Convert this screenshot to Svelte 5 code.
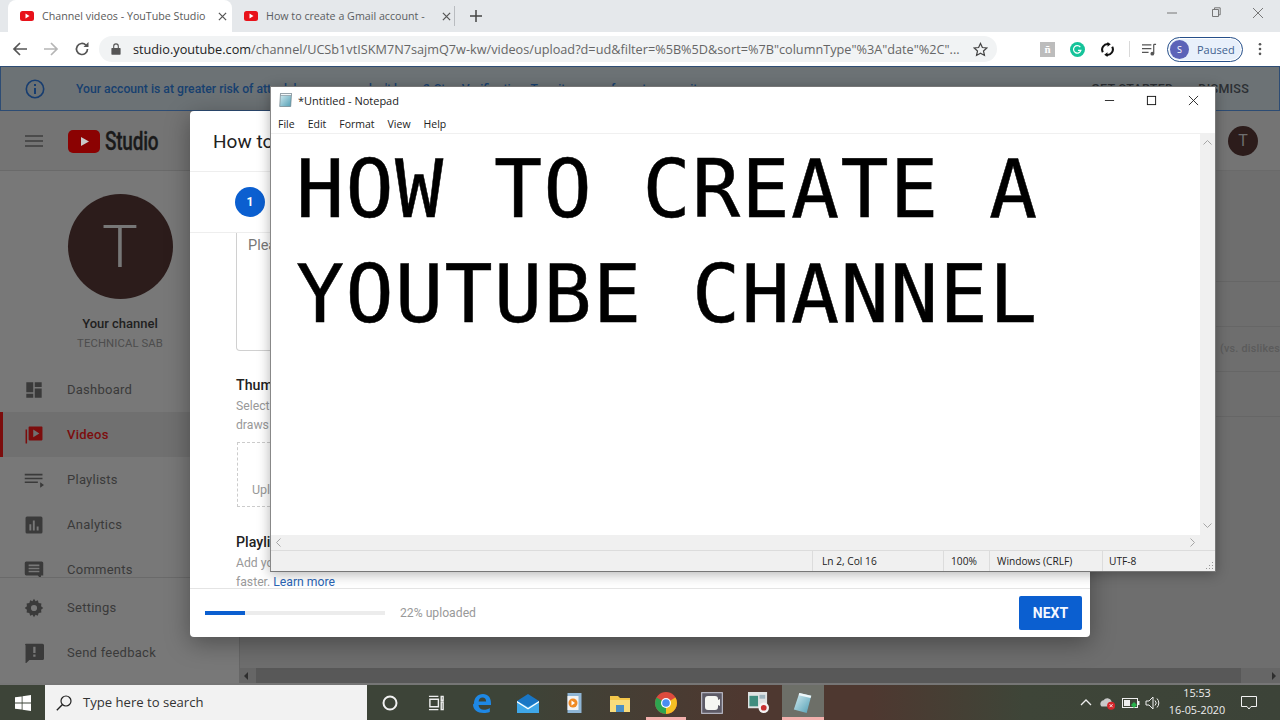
<script>
  const scrollNav = [
    { label: 'Dashboard', d: 'M3 3h9v13H3zM14 3h9v6h-9zM14 11h9v12h-9zM3 18h9v5H3z' },
    { label: 'Videos', active: true, d: 'M7 2h16a1 1 0 0 1 1 1v16a1 1 0 0 1-1 1H7a1 1 0 0 1-1-1V3a1 1 0 0 1 1-1zM12 6v10l8-5zM2 6h2v18h-2z' },
    { label: 'Playlists', d: 'M1 5h23v2H1zM1 10h23v2H1zM1 15h17v2H1zM21 16v7l5-3.500z' },
    { label: 'Analytics', d: 'M4 2h18a2 2 0 0 1 2 2v18a2 2 0 0 1-2 2H4a2 2 0 0 1-2-2V4a2 2 0 0 1 2-2zM7 12v8h2.500v-8zM11.500 7v13H14V7zM16.500 15v5H19v-5z' },
    { label: 'Comments', d: 'M3 2h20a2 2 0 0 1 2 2v16h-3v5l-4-5H3a2 2 0 0 1-2-2V4a2 2 0 0 1 2-2zM6 6v2h14V6zM6 10v2h14v-2zM6 14v2h14v-2z' }
  ];
  const fixedNav = [
    { label: 'Settings', d: 'M13 1l2 3.200 3-1.200 1 3.600 3.600.400-.400 3.600L25 13l-2.800 2.400.400 3.600-3.600.400-1 3.600-3-1.200L13 25l-2-3.200-3 1.200-1-3.600-3.600-.400.400-3.600L1 13l2.800-2.400-.400-3.600 3.600-.400 1-3.600 3 1.200zM13 9a4 4 0 1 0 0 8 4 4 0 0 0 0-8z' },
    { label: 'Send feedback', d: 'M3 1h21a2 2 0 0 1 2 2v17a2 2 0 0 1-2 2H7l-5 5V3a1 1 0 0 1 1-2zM12 5v8h3V5zM12 15v3h3v-3z' }
  ];
</script>

{#snippet navItem(item)}
  <div class="item" class:current={item.active}>
    <svg viewBox="0 0 26 26"><path d={item.d} fill={item.active ? '#7c0d0d' : '#3a3a3a'} fill-rule="evenodd"/></svg>
    <span>{item.label}</span>
  </div>
{/snippet}

<div class="screen">
  <div class="tabstrip">
    <div class="tab active">
      <svg class="fav" viewBox="0 0 14 10"><rect width="14" height="10" rx="2.500" fill="#e8121a"/><path d="M5.500 2.500v5l4-2.500z" fill="#fff"/></svg>
      <span class="tabtitle">Channel videos - YouTube Studio</span>
      <svg class="x" viewBox="0 0 10 10"><path d="M1 1l8 8M9 1l-8 8" stroke="#555" stroke-width="1.400"/></svg>
    </div>
    <div class="tab">
      <svg class="fav" viewBox="0 0 14 10"><rect width="14" height="10" rx="2.500" fill="#e8121a"/><path d="M5.500 2.500v5l4-2.500z" fill="#fff"/></svg>
      <span class="tabtitle">How to create a Gmail account -</span>
      <svg class="x" viewBox="0 0 10 10"><path d="M1 1l8 8M9 1l-8 8" stroke="#555" stroke-width="1.400"/></svg>
    </div>
    <span class="tabsep"></span>
    <svg class="plus" viewBox="0 0 12 12"><path d="M6 0v12M0 6h12" stroke="#444" stroke-width="1.500"/></svg>
    <div class="winbtns">
      <svg viewBox="0 0 12 12"><path d="M1 6h10" stroke="#777"/></svg>
      <svg viewBox="0 0 12 12"><path d="M3.500 2.500h6v7h-6zM5.500 2.500V.8h5.700v7H9.500" fill="none" stroke="#777"/></svg>
      <svg viewBox="0 0 12 12"><path d="M1 1l10 10M11 1L1 11" stroke="#777"/></svg>
    </div>
  </div>

  <div class="toolbar">
    <svg class="nav" viewBox="0 0 16 16"><path d="M15 8H2M8 2L2 8l6 6" fill="none" stroke="#555" stroke-width="1.700"/></svg>
    <svg class="nav" viewBox="0 0 16 16"><path d="M1 8h13M8 2l6 6-6 6" fill="none" stroke="#b5b5b5" stroke-width="1.700"/></svg>
    <svg class="nav" viewBox="0 0 16 16"><path d="M13.500 8a5.500 5.500 0 1 1-1.600-3.900" fill="none" stroke="#555" stroke-width="1.700"/><path d="M14.500 1v5h-5z" fill="#555"/></svg>
    <div class="omnibox">
      <svg class="lock" viewBox="0 0 10 12"><path d="M1 5h8a.6.600 0 0 1 .6.600v5.500a.6.600 0 0 1-.6.600H1a.6.600 0 0 1-.6-.600V5.600A.6.600 0 0 1 1 5z" fill="#555"/><path d="M2.700 5V3.200a2.300 2.300 0 0 1 4.600 0V5" fill="none" stroke="#555" stroke-width="1.100"/></svg>
      <span class="url"><b>studio.youtube.com</b>/channel/UCSb1vtISKM7N7sajmQ7w-kw/videos/upload?d=ud&amp;filter=%5B%5D&amp;sort=%7B"columnType"%3A"date"%2C"...</span>
      <svg class="star" viewBox="0 0 16 16"><path d="M8 1.500l2 4.400 4.700.5-3.500 3.200 1 4.700L8 11.900l-4.200 2.400 1-4.700L1.300 6.400 6 5.900z" fill="none" stroke="#444" stroke-width="1.300"/></svg>
    </div>
    <div class="exts">
      <span class="ext-f">ñ</span>
      <svg class="ext" viewBox="0 0 16 16"><circle cx="8" cy="8" r="8" fill="#15c39a"/><path d="M11 5.500a4 4 0 1 0 .6 3.500H8.500" fill="none" stroke="#fff" stroke-width="1.300"/></svg>
      <svg class="ext" viewBox="0 0 16 16"><path d="M3 11A6 6 0 0 1 9 2.200M13 5a6 6 0 0 1-6 8.800" fill="none" stroke="#111" stroke-width="2.200"/><path d="M8 0l3.500 2.500L8 5zM8 11l-3.500 2.500L8 16z" fill="#111"/></svg>
      <span class="toolsep"></span>
      <svg class="ext music" viewBox="0 0 16 16"><path d="M0 3h10M0 7h10M0 11h7" stroke="#555" stroke-width="1.300"/><path d="M12.500 2.500H15M12.500 2.500v10" stroke="#555" stroke-width="1.300" fill="none"/><circle cx="11" cy="12.500" r="2" fill="#555"/></svg>
      <div class="profile"><span class="pavatar">S</span><span>Paused</span></div>
      <svg class="dots" viewBox="0 0 4 16"><circle cx="2" cy="2.500" r="1.500" fill="#555"/><circle cx="2" cy="8" r="1.500" fill="#555"/><circle cx="2" cy="13.500" r="1.500" fill="#555"/></svg>
    </div>
  </div>

  <div class="page">
    <div class="banner">
      <svg class="info" viewBox="0 0 20 20"><circle cx="10" cy="10" r="8.700" fill="none" stroke="#173d70" stroke-width="1.600"/><path d="M9 9h2v6H9zM9 5h2v2H9z" fill="#173d70"/></svg>
      <span class="bantext">Your account is at greater risk of attack because you don't have 2-Step Verification. Turn it on now for extra security.</span>
      <span class="banbtn first">GET STARTED</span>
      <span class="banbtn">DISMISS</span>
    </div>
    <div class="head">
      <svg class="burger" viewBox="0 0 18 12"><path d="M0 1h18M0 6h18M0 11h18" stroke="#3e3e3e" stroke-width="1.700"/></svg>
      <svg class="ytlogo" viewBox="0 0 32 23"><rect width="32" height="23" rx="5" fill="#8b0202"/><path d="M13 7v9l8-4.500z" fill="#c9c9c9"/></svg>
      <span class="studio">Studio</span>
      <span class="headav">T</span>
    </div>
    <div class="pagebody">
      <aside class="sidebar">
        <div class="channel">
          <div class="bigav">T</div>
          <div class="chname">Your channel</div>
          <div class="chsub">TECHNICAL SAB</div>
        </div>
        <nav class="menu">
          {#each scrollNav as item}{@render navItem(item)}{/each}
        </nav>
        <nav class="menufixed">
          {#each fixedNav as item}{@render navItem(item)}{/each}
        </nav>
      </aside>
      <main class="content">
        <div class="rows">
          <div class="row"></div>
          <div class="row"></div>
          <div class="row metric">(vs. dislikes</div>
          <div class="row"></div>
        </div>
        <div class="hscroll">
          <span class="arrow left"></span>
          <span class="thumb"></span>
          <span class="arrow right"></span>
        </div>
      </main>
    </div>
  </div>

  <footer class="taskbar">
    <svg class="start" viewBox="0 0 16 16"><path d="M0 2.300l6.700-.9v6.200H0zM7.500 1.300L16 0v7.600H7.500zM0 8.400h6.700v6.200L0 13.700zM7.500 8.400H16V16l-8.500-1.200z" fill="#fff"/></svg>
    <div class="search">
      <svg viewBox="0 0 16 16"><circle cx="10" cy="6" r="5" fill="none" stroke="#222" stroke-width="1.200"/><path d="M6.500 9.500L.8 15.200" stroke="#222" stroke-width="1.400"/></svg>
      <span>Type here to search</span>
    </div>
    <div class="tb"><svg class="i15" viewBox="0 0 16 16"><circle cx="8" cy="8" r="6.500" fill="none" stroke="#f2f2f2" stroke-width="2"/></svg></div>
    <div class="tb"><svg class="i17" viewBox="0 0 18 16"><path d="M1 1h10M1 15h10M2 4h9v8H2zM14 1h2v4h-2zM14 7h2v8h-2z" fill="none" stroke="#eee" stroke-width="1.500"/></svg></div>
    <div class="tb"><svg class="i20" viewBox="0 0 20 20"><path d="M2 10.500C2 5 5.500 1 11 1c5 0 8 3.500 8 9.500v1.500H6.500c.2 3 2.400 4.800 5.300 4.800 2.400 0 4.700-.8 6-1.800V19c-1.800.8-4 1-6.300 1C5.500 20 1 16.500 1 11.500zM6.600 8.500h7.500c0-2.500-1.400-4-3.600-4-2.200 0-3.600 1.600-3.900 4z" fill="#1e88e5" fill-rule="evenodd"/></svg></div>
    <div class="tb"><svg class="i22" viewBox="0 0 22 20"><path d="M0 8h22v12H0z" fill="#3fa7e8"/><path d="M11 1l11 7-11 6L0 8z" fill="#1976c5"/><path d="M0 8l11 7 11-7v1.500L11 16.500 0 9.500z" fill="#fff"/></svg></div>
    <div class="tb"><svg class="i17b" viewBox="0 0 16 20"><rect x="1" y="0" width="14" height="20" fill="#8fb6d6"/><rect x="1" y="3" width="11" height="14" fill="#f3f3f3"/><circle cx="6.500" cy="10" r="4.500" fill="#f08a24"/><path d="M5 7.500v5l3.500-2.500z" fill="#fff"/></svg></div>
    <div class="tb"><svg class="i20" viewBox="0 0 20 18"><path d="M0 2h8l2 2h10v14H0z" fill="#f4c74b"/><path d="M0 6h20v12H0z" fill="#f9dc7c"/><rect x="6" y="11" width="8" height="7" fill="#4a8fc7"/></svg></div>
    <div class="tb running"><svg class="i22" viewBox="0 0 22 22"><circle cx="11" cy="11" r="11" fill="#dd4b3e"/><path d="M11 11L20.500 5.500A11 11 0 0 1 11 22z" fill="#f5c024"/><path d="M11 11L1.500 5.500A11 11 0 0 0 11 22z" fill="#2ea44f"/><circle cx="11" cy="11" r="5" fill="#fff"/><circle cx="11" cy="11" r="3.800" fill="#4a8df0"/></svg></div>
    <div class="tb"><svg class="i22" viewBox="0 0 22 22"><rect width="22" height="22" fill="#5d5a66"/><rect x=".7" y=".7" width="20.600" height="20.600" fill="none" stroke="#c9c9d4" stroke-width="1"/><path d="M4 7a3 3 0 0 1 3-3h7a3 3 0 0 1 3 3v1l2-1v7l-2-1v2a3 3 0 0 1-3 3H7a3 3 0 0 1-3-3z" fill="#f6f6f2"/></svg></div>
    <div class="tb"><svg class="i21" viewBox="0 0 22 22"><rect width="20" height="17" fill="#dfe3e3"/><rect x="1.500" y="4" width="9" height="11" fill="#3f8d7e"/><rect x="12" y="3" width="6" height="4" fill="#9fb5bf"/><circle cx="16.500" cy="16.500" r="5.500" fill="#f4f4f4"/><circle cx="16.500" cy="16.500" r="3" fill="#c73131"/></svg></div>
    <div class="tb active-tb">
      <svg class="i22" viewBox="0 0 22 24">
        <defs><linearGradient id="npg" x1="0" y1="0" x2="1" y2="1"><stop offset="0" stop-color="#d8eef3"/><stop offset="1" stop-color="#4f9db3"/></linearGradient></defs>
        <path d="M7 1l13 3-5 19L1 19z" fill="url(#npg)"/><path d="M7 1l13 3-.7 2.500L6.300 3.500z" fill="#eef7f9"/>
      </svg>
    </div>
    <div class="tray">
      <svg class="chev" viewBox="0 0 12 7"><path d="M1 6l5-5 5 5" fill="none" stroke="#eee" stroke-width="1.300"/></svg>
      <svg class="t16 cloud" viewBox="0 0 18 16"><path d="M1 11a4 4 0 0 1 3-6 5 5 0 0 1 9 1v6H3a2 2 0 0 1-2-1z" fill="#c9c9c9"/><circle cx="12.500" cy="11" r="4.500" fill="#d4252a"/><path d="M10.800 9.300l3.400 3.400M14.200 9.300l-3.400 3.400" stroke="#fff"/></svg>
      <svg class="t18" viewBox="0 0 18 14"><rect x=".5" y="2.500" width="15" height="9" fill="none" stroke="#eee"/><rect x="2" y="4" width="6" height="6" fill="#eee"/><path d="M16 5h1.500v4H16z" fill="#eee"/><path d="M12 6l3 3-3 3-3-3z" fill="#27b24a"/></svg>
      <svg class="t16" viewBox="0 0 16 16"><path d="M1 6h3l4-4v12l-4-4H1z" fill="none" stroke="#eee"/><path d="M10 5.500a3.500 3.500 0 0 1 0 5M12 3.500a6.500 6.500 0 0 1 0 9" fill="none" stroke="#eee"/></svg>
      <div class="clock"><span>15:53</span><span>16-05-2020</span></div>
      <svg class="notif" viewBox="0 0 16 16"><path d="M.5 1.500h15v10H10l-2 2.500-2-2.500H.5z" fill="none" stroke="#f2f2f2"/></svg>
    </div>
  </footer>

  <section class="modal">
    <h1>How to create a YouTube channel</h1>
    <div class="steps"><span class="stepnum">1</span></div>
    <div class="mbody">
      <div class="descbox">Please</div>
      <h2>Thumbnail</h2>
      <p>Select</p>
      <p>draws</p>
      <div class="dropzone">Upload</div>
      <h2 class="playlist">Playlists</h2>
      <p>Add your</p>
      <p>faster. <a href="#learn">Learn more</a></p>
    </div>
    <div class="mfoot">
      <div class="progress"><span class="fill"></span></div>
      <span class="pct">22% uploaded</span>
      <button class="next">NEXT</button>
    </div>
  </section>

  <section class="notepad">
    <div class="nptitle">
      <svg class="npicon" viewBox="0 0 16 16">
        <path d="M2.500 1.500h11l-.8 13H1.700z" fill="url(#npg)" stroke="#6f7f88" stroke-width=".7"/>
        <path d="M2.500 1.500h11v2h-11z" fill="#f2f7f9" stroke="#7b8890" stroke-width=".6"/>
      </svg>
      <span class="npname">*Untitled - Notepad</span>
      <svg class="npc" viewBox="0 0 12 12"><path d="M1 6h10" stroke="#222"/></svg>
      <svg class="npc" viewBox="0 0 12 12"><rect x="1.500" y="1.500" width="9" height="9" fill="none" stroke="#111"/></svg>
      <svg class="npc" viewBox="0 0 12 12"><path d="M1 1l10 10M11 1L1 11" stroke="#222"/></svg>
    </div>
    <div class="npmenu"><span>File</span><span>Edit</span><span>Format</span><span>View</span><span>Help</span></div>
    <div class="npedit">
      <div class="nptext">HOW TO CREATE A<br>YOUTUBE CHANNEL</div>
      <div class="vscroll">
        <svg viewBox="0 0 9 5"><path d="M.5 4.500l4-4 4 4" fill="none" stroke="#a6a6a6"/></svg>
        <svg viewBox="0 0 9 5"><path d="M.5.500l4 4 4-4" fill="none" stroke="#a6a6a6"/></svg>
      </div>
    </div>
    <div class="nphs">
      <svg viewBox="0 0 5 9"><path d="M4.500.5l-4 4 4 4" fill="none" stroke="#a6a6a6"/></svg>
      <svg viewBox="0 0 5 9"><path d="M.5.500l4 4-4 4" fill="none" stroke="#a6a6a6"/></svg>
    </div>
    <div class="npstatus">
      <span class="cell c1">Ln 2, Col 16</span>
      <span class="cell c2">100%</span>
      <span class="cell c3">Windows (CRLF)</span>
      <span class="cell c4">UTF-8</span>
      <svg class="grip" viewBox="0 0 9 9"><path d="M7 1h1v1H7zM4 4h1v1H4zM7 4h1v1H7zM1 7h1v1H1zM4 7h1v1H4zM7 7h1v1H7z" fill="#999"/></svg>
    </div>
  </section>
</div>

<style>
  :global(body) { margin: 0; background: #000; }
  .screen {
    position: relative; width: 1280px; height: 720px; overflow: hidden;
    display: flex; flex-direction: column;
    font-family: Roboto, "Liberation Sans", sans-serif;
  }
  svg { display: block; flex: none; }

  .tabstrip { height: 32px; background: #e5e8eb; display: flex; align-items: center; flex: none; font-family: "Open Sans", sans-serif; }
  .tab { width: 224px; height: 32px; display: flex; align-items: center; box-sizing: border-box; padding: 0 0 0 12px; gap: 8px; color: #5b5e62; font-size: 10.700px; }
  .tab.active { margin-left: 8px; background: #fff; border-radius: 8px 8px 0 0; color: #5a5a5a; }
  .fav { width: 14px; height: 10px; }
  .tabtitle { width: 168px; white-space: nowrap; }
  .x { width: 9px; height: 9px; }
  .tabsep { width: 1px; height: 20px; background: #b9bcc0; margin-left: -2px; }
  .plus { width: 12px; height: 12px; margin-left: 15px; }
  .winbtns { margin-left: auto; display: flex; gap: 31px; padding-right: 16px; }
  .winbtns svg { width: 12px; height: 12px; margin-top: -6px; }

  .toolbar { height: 34px; background: #fff; display: flex; align-items: center; flex: none; padding-left: 12px; box-sizing: border-box; }
  .nav { width: 16px; height: 16px; margin-right: 15px; }
  .omnibox { width: 898px; margin-left: -6px; height: 26px; border-radius: 13px; background: #f1f3f4; display: flex; align-items: center; padding-left: 12px; box-sizing: border-box; flex: none; }
  .lock { width: 10px; height: 12px; margin-right: 12px; }
  .url { font-family: "Open Sans", sans-serif; font-size: 12.700px; color: #666; white-space: nowrap; width: 827px; }
  .url b { font-weight: 400; color: #222; }
  .star { width: 15px; height: 15px; margin-left: 13px; }
  .exts { display: flex; align-items: center; margin-left: 43px; }
  .ext-f { width: 15px; height: 15px; background: #bcbcbc; color: #fff; font: 700 11px/15px "Liberation Serif", serif; text-align: center; margin-right: 15px; }
  .ext { width: 15px; height: 15px; margin-right: 15px; }
  .ext.music { margin-right: 0; }
  .toolsep { width: 1px; height: 16px; background: #d9d9d9; margin: 0 12px 0 -1px; }
  .profile { margin-left: 10px; width: 76px; height: 25px; box-sizing: border-box; border: 1px solid #27508a; border-radius: 13px; background: #e8f0fb; display: flex; align-items: center; gap: 8px; padding-left: 1px; font: 11px "Open Sans", sans-serif; color: #3f5f8f; box-shadow: inset 0 0 0 1px #fff; }
  .pavatar { width: 19px; height: 19px; margin-left: 1px; border-radius: 50%; background: #5c63b8; color: #fff; font-size: 9px; text-align: center; line-height: 19px; }
  .dots { width: 4px; height: 14px; margin-left: 15px; }

  .page { flex: 1; min-height: 0; display: flex; flex-direction: column; background: #6e6e6e; }
  .banner { height: 45px; flex: none; box-sizing: border-box; background: #6c7275; border: 1px solid #2d4c74; display: flex; align-items: center; font-weight: 500; font-size: 12.200px; color: #17406f; padding-left: 24px; white-space: nowrap; }
  .info { width: 20px; height: 20px; margin-right: 31px; }
  .banbtn { color: #2b2f33; font-size: 12.500px; letter-spacing: .02em; margin-left: 25px; }
  .banbtn.first { margin-left: auto; }
  .banner .banbtn:last-child { margin-right: 30px; }

  .head { height: 60px; flex: none; background: #747474; border-bottom: 1px solid #6a6a6a; box-sizing: border-box; display: flex; align-items: center; padding: 1px 22px 0 25px; }
  .burger { width: 18px; height: 12px; margin-right: 25px; }
  .ytlogo { width: 32px; height: 23px; margin-right: 5px; }
  .studio { font-size: 26px; font-weight: 500; color: #1a1a1a; display: inline-block; width: 53px; transform: scaleX(.73); transform-origin: left; letter-spacing: -.3px; -webkit-text-stroke: .3px #1a1a1a; }
  .headav { margin-left: auto; width: 30px; height: 30px; border-radius: 50%; background: #2c1c1b; color: #6e6e6e; font-size: 16px; line-height: 30px; text-align: center; }

  .pagebody { flex: 1; min-height: 0; display: flex; }
  .sidebar { width: 240px; flex: none; box-sizing: border-box; background: #787878; border-right: 1px solid #666; display: flex; flex-direction: column; }
  .channel { display: flex; flex-direction: column; align-items: center; padding: 23px 0 0 1px; box-sizing: border-box; }
  .bigav { width: 105px; height: 105px; border-radius: 50%; background: #2c1c1b; color: #777; font-size: 60px; font-weight: 300; line-height: 105px; text-align: center; }
  .chname { margin-top: 17px; font-size: 13px; font-weight: 500; color: #1f1f1f; line-height: 16px; }
  .chsub { margin-top: 4px; font-size: 11.300px; color: #4d4d4d; line-height: 16px; letter-spacing: .01em; }
  .menu { margin-top: 15px; height: 210px; overflow: hidden; flex: none; border-bottom: 1px solid #6a6a6a; }
  .menufixed { padding-top: 7px; }
  .item { height: 45px; display: flex; align-items: center; gap: 23px; padding-left: 24px; font-size: 13px; color: #3a3a3a; letter-spacing: .02em; box-sizing: border-box; }
  .item svg { width: 20px; height: 20px; }
  .item.current { background: #707070; color: #7c0d0d; font-weight: 500; border-left: 3px solid #7c0d0d; padding-left: 21px; }

  .content { flex: 1; min-width: 0; display: flex; flex-direction: column; background: #6e6e6e; }
  .rows { flex: 1; padding-top: 66px; }
  .row { height: 44px; border-bottom: 1px solid #666; color: #5b5b5b; font-size: 10.800px; font-weight: 500; letter-spacing: .02em; line-height: 44px; padding-left: 980px; white-space: nowrap; }
  .hscroll { height: 15px; flex: none; display: flex; background: #666; align-items: center; }
  .thumb { flex: 1; height: 15px; background: #585858; }
  .arrow { width: 16px; height: 15px; position: relative; background: #666; }
  .arrow::before { content: ''; position: absolute; top: 4px; border: 4px solid transparent; }
  .arrow.left::before { left: 0; border-right-color: #2e2e2e; }
  .arrow.right::before { right: 0; border-left-color: #2e2e2e; }
  .arrow.right { width: 39px; }

  .taskbar { height: 37px; flex: none; box-sizing: border-box; border-top: 2px solid #767676; display: flex; align-items: center; background: linear-gradient(90deg, #3d4438 0 40%, #4e3830 58%, #4e3830 68%, #3e4538 80%, #3c4338 100%); }
  .start { width: 16px; height: 16px; margin: 0 14px 0 15px; }
  .search { width: 322px; height: 35px; background: #f2f2f2; display: flex; align-items: center; gap: 11px; padding-left: 11px; box-sizing: border-box; font: 13.100px "Open Sans", sans-serif; color: #333; }
  .search svg { width: 16px; height: 16px; }
  .search span { margin-top: -2px; }
  .tb { width: 46px; height: 35px; display: flex; align-items: center; justify-content: center; flex: none; position: relative; }
  .running::after, .active-tb::after { content: ''; position: absolute; left: 3px; right: 3px; bottom: 0; height: 3px; background: #f2b0ad; }
  .active-tb { width: 42px; background: #6d6f68; margin-left: 1px; }
  .active-tb::after { left: 0; right: 0; }
  .i15 { width: 16px; height: 16px; }
  .i17 { width: 17px; height: 16px; }
  .i17b { width: 17px; height: 20px; }
  .i20 { width: 20px; height: 20px; }
  .i21 { width: 21px; height: 21px; }
  .i22 { width: 22px; height: 22px; }
  .tray { margin-left: auto; display: flex; align-items: center; color: #eee; padding-right: 23px; }
  .chev { width: 12px; height: 7px; margin-right: 8px; }
  .t16 { width: 16px; height: 16px; margin-right: 6px; }
  .t18 { width: 18px; height: 14px; margin-right: 5px; }
  .clock { display: flex; flex-direction: column; align-items: center; width: 60px; font: 10.800px/17px "Open Sans", sans-serif; margin: -3px 14px 0 0; white-space: nowrap; }
  .notif { width: 16px; height: 16px; }

  .modal { position: absolute; left: 190px; top: 111px; width: 900px; height: 526px; background: #fff; border-radius: 4px; box-shadow: 0 6px 24px rgba(0,0,0,.35); display: flex; flex-direction: column; overflow: hidden; }
  .modal h1 { margin: 0; height: 60px; flex: none; font-size: 19px; font-weight: 400; line-height: 61px; padding-left: 23px; color: #222; white-space: nowrap; }
  .steps { height: 62px; flex: none; border-top: 1px solid #eee; border-bottom: 1px solid #eee; box-sizing: border-box; display: flex; align-items: center; padding-left: 45px; }
  .stepnum { width: 30px; height: 30px; border-radius: 50%; background: #0b5fd0; color: #fff; font-size: 12px; font-weight: 700; line-height: 30px; text-align: center; }
  .mbody { flex: 1; min-height: 0; overflow: hidden; padding-left: 46px; }
  .descbox { height: 118px; box-sizing: border-box; border: 1px solid #d0d0d0; border-top: 0; border-radius: 0 0 4px 4px; padding: 4px 11px; font-size: 14.500px; color: #777; line-height: 18px; }
  .mbody h2 { margin: 25px 0 0; font-size: 14.200px; font-weight: 500; line-height: 18px; color: #222; position: relative; top: 0; }
  .mbody p { margin: 0; font-size: 12.200px; color: #999; line-height: 19px; }
  .mbody h2 + p { margin-top: 3px; }
  .dropzone { margin-top: 7px; margin-left: 1px; height: 65px; border: 1px dashed #ccc; box-sizing: border-box; padding: 39px 0 0 14px; font-size: 12.500px; line-height: 16px; color: #999; }
  .mbody h2.playlist { margin-top: 26px; }
  .mbody a { color: #2a65b5; text-decoration: none; }
  .mfoot { height: 49px; flex: none; box-sizing: border-box; border-top: 1px solid #e4e4e4; display: flex; align-items: center; padding: 0 8px 0 15px; }
  .progress { width: 180px; height: 4px; background: #ececec; }
  .fill { display: block; width: 40px; height: 4px; background: #0b5fd0; }
  .pct { margin-left: 15px; font-size: 12.200px; color: #999; }
  .next { margin-left: auto; width: 63px; height: 34px; border: 0; border-radius: 2px; background: #0b5fd0; color: #f4f8ff; font: 700 14px Roboto, sans-serif; padding: 0; }

  .notepad { position: absolute; left: 270px; top: 86px; width: 946px; height: 486px; box-sizing: border-box; border: 1px solid #777; border-left-color: #888; background: #fff; box-shadow: 0 2px 12px rgba(0,0,0,.3); display: flex; flex-direction: column; font-family: "Open Sans", sans-serif; color: #222; }
  .nptitle { height: 26px; flex: none; display: flex; align-items: center; padding-left: 7px; font-size: 11px; }
  .npicon { width: 16px; height: 16px; margin-right: 4px; }
  .npname { flex: 1; }
  .npc { width: 11px; height: 11px; margin-right: 31px; }
  .npc:last-child { margin-right: 16px; }
  .npmenu { height: 20px; flex: none; display: flex; gap: 13px; padding-left: 7px; font-size: 10.500px; line-height: 22px; border-bottom: 1px solid #f0f0f0; }
  .npedit { flex: 1; min-height: 0; display: flex; }
  .nptext { flex: 1; padding: 3px 0 0 25px; font: 400 80px/105px "DejaVu Sans Mono", monospace; letter-spacing: 1.340px; -webkit-text-stroke: .5px #000; color: #000; white-space: nowrap; overflow: hidden; }
  .vscroll { width: 15px; background: #f0f0f0; display: flex; flex-direction: column; justify-content: space-between; align-items: center; padding: 6px 0 7px; box-sizing: border-box; }
  .vscroll svg { width: 9px; height: 5px; }
  .nphs { height: 15px; flex: none; background: #f0f0f0; display: flex; justify-content: space-between; align-items: center; padding: 0 20px 0 5px; border-bottom: 1px solid #dcdcdc; box-sizing: content-box; }
  .nphs svg { width: 5px; height: 9px; }
  .npstatus { height: 20px; flex: none; background: #f0f0f0; display: flex; font-size: 10.200px; line-height: 20px; position: relative; }
  .cell { box-sizing: border-box; border-left: 1px solid #dcdcdc; padding-left: 9px; white-space: nowrap; }
  .c1 { margin-left: 541px; width: 131px; }
  .c2 { width: 46px; padding-left: 7px; }
  .c3 { width: 113px; padding-left: 7px; }
  .c4 { width: 110px; padding-left: 6px; }
  .grip { position: absolute; right: 1px; bottom: 1px; width: 9px; height: 9px; }
</style>
